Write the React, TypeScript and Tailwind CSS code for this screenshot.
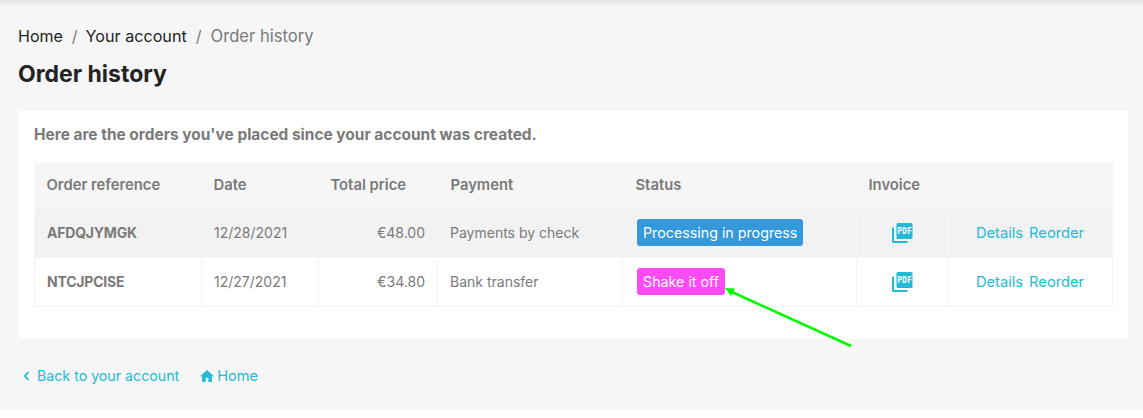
const orders = [
  { ref: "AFDQJYMGK", date: "12/28/2021", price: "€48.00", payment: "Payments by check", status: "Processing in progress", color: "bg-[#3498db]", rowBg: "bg-[#f2f2f2]", line: "border-[#f8f8f8]" },
  { ref: "NTCJPCISE", date: "12/27/2021", price: "€34.80", payment: "Bank transfer", status: "Shake it off", color: "bg-[#ff4af5]", rowBg: "bg-white", line: "border-[#f3f3f3]" },
];

function PdfIcon() {
  return (
    <svg width="21" height="20" viewBox="0 0 21 20" className="mx-auto">
      <path d="M0 4.500h2v13.500h13.500v2H1.500A1.500 1.500 0 0 1 0 18.500z" fill="#25b9d7" />
      <rect x="4.500" y="0" width="16" height="16" rx="1.500" fill="#25b9d7" />
      <text x="12.500" y="10.500" textAnchor="middle" fontSize="8" fontWeight="700" fill="#fff" fontFamily="'DejaVu Sans Mono', monospace">PDF</text>
    </svg>
  );
}

export default function App() {
  return (
    <div className="relative h-[418px] w-full overflow-hidden bg-[#f6f6f6] font-['Inter',sans-serif] text-[14px] text-[#7a7a7a]">
      <div className="h-[6px] bg-gradient-to-b from-[#e2e2e2] to-[#f6f6f6]" />

      <div className="px-[18px]">
        <nav className="mt-[18px] flex h-6 items-center text-[16px] text-[#232323]">
          <a>Home</a>
          <span className="ml-[9px] mr-2 text-[#7a7a7a]">/</span>
          <a className="text-[16.15px]">Your account</a>
          <span className="mx-[9px] text-[#7a7a7a]">/</span>
          <span className="text-[16.6px] text-[#7a7a7a]">Order history</span>
        </nav>
        <h1 className="mt-[12px] h-7 text-[23px] font-bold leading-7 text-[#232323]">Order history</h1>

        <section className="mt-[23px] h-[228px] w-[1110px] bg-white px-4 pt-[14px]">
          <h6 className="h-5 text-[15.45px] font-bold leading-5">Here are the orders you've placed since your account was created.</h6>
          <table className="mt-[17px] w-[1078px] table-fixed border-collapse">
            <colgroup>
              <col className="w-[167px]" />
              <col className="w-[117px]" />
              <col className="w-[119px]" />
              <col className="w-[185px]" />
              <col className="w-[234px]" />
              <col className="w-[91px]" />
              <col className="w-[165px]" />
            </colgroup>
            <thead>
              <tr className="h-[46px] bg-[#f6f6f6] text-left text-[14.8px]">
                <th className="pl-[12px] font-semibold">Order reference</th>
                <th className="pl-[12px] font-semibold">Date</th>
                <th className="pl-[12px] font-semibold">Total price</th>
                <th className="pl-[13px] font-semibold">Payment</th>
                <th className="pl-[13px] font-semibold">Status</th>
                <th className="pl-[12px] font-semibold">Invoice</th>
                <th />
              </tr>
            </thead>
            <tbody>
              {orders.map((o) => (
                <tr key={o.ref} className={`h-[49px] ${o.rowBg}`}>
                  <td className={`border pl-[12px] font-bold tracking-[-0.2px] ${o.line}`}>{o.ref}</td>
                  <td className={`border pl-[12px] ${o.line}`}>{o.date}</td>
                  <td className={`border pr-[12px] text-right ${o.line}`}>{o.price}</td>
                  <td className={`border pl-[12px] ${o.line}`}>{o.payment}</td>
                  <td className={`border pl-[14px] ${o.line}`}>
                    <span className={`inline-block h-[27px] rounded-[3px] px-[6px] text-[14.25px] leading-[27px] text-white ${o.color}`}>{o.status}</span>
                  </td>
                  <td className={`border ${o.line}`}>
                    <PdfIcon />
                  </td>
                  <td className={`border pt-[2px] text-center text-[14.7px] text-[#25b9d7] ${o.line}`}>
                    <a>Details</a>
                    <a className="ml-[6px]">Reorder</a>
                  </td>
                </tr>
              ))}
            </tbody>
          </table>
        </section>

        <footer className="mt-[25px] flex h-6 items-center text-[14.2px] text-[#25b9d7]">
          <a className="ml-[5px] flex items-center">
            <svg width="7" height="10" viewBox="0 0 7 10" className="mr-[7px]">
              <path d="M5.500 1L1.800 5l3.700 4" fill="none" stroke="#25b9d7" strokeWidth="1.800" />
            </svg>
            Back to your account
          </a>
          <a className="ml-[21px] flex items-center text-[14.6px]">
            <svg width="14" height="12" viewBox="2 3 20 17" className="mr-[3px]">
              <path d="M10 20v-6h4v6h5v-8h3L12 3 2 12h3v8z" fill="#25b9d7" />
            </svg>
            <span className="pt-[2px]">Home</span>
          </a>
        </footer>
      </div>

      <div className="absolute bottom-0 left-0 h-2 w-full bg-white" />

      <svg className="absolute left-[720px] top-[280px]" width="140" height="72" viewBox="0 0 140 72">
        <path d="M131 66L12 12" stroke="#00f700" strokeWidth="2.500" fill="none" />
        <path d="M5 8L15 8.500L11 16z" fill="#00f700" />
      </svg>
    </div>
  );
}
